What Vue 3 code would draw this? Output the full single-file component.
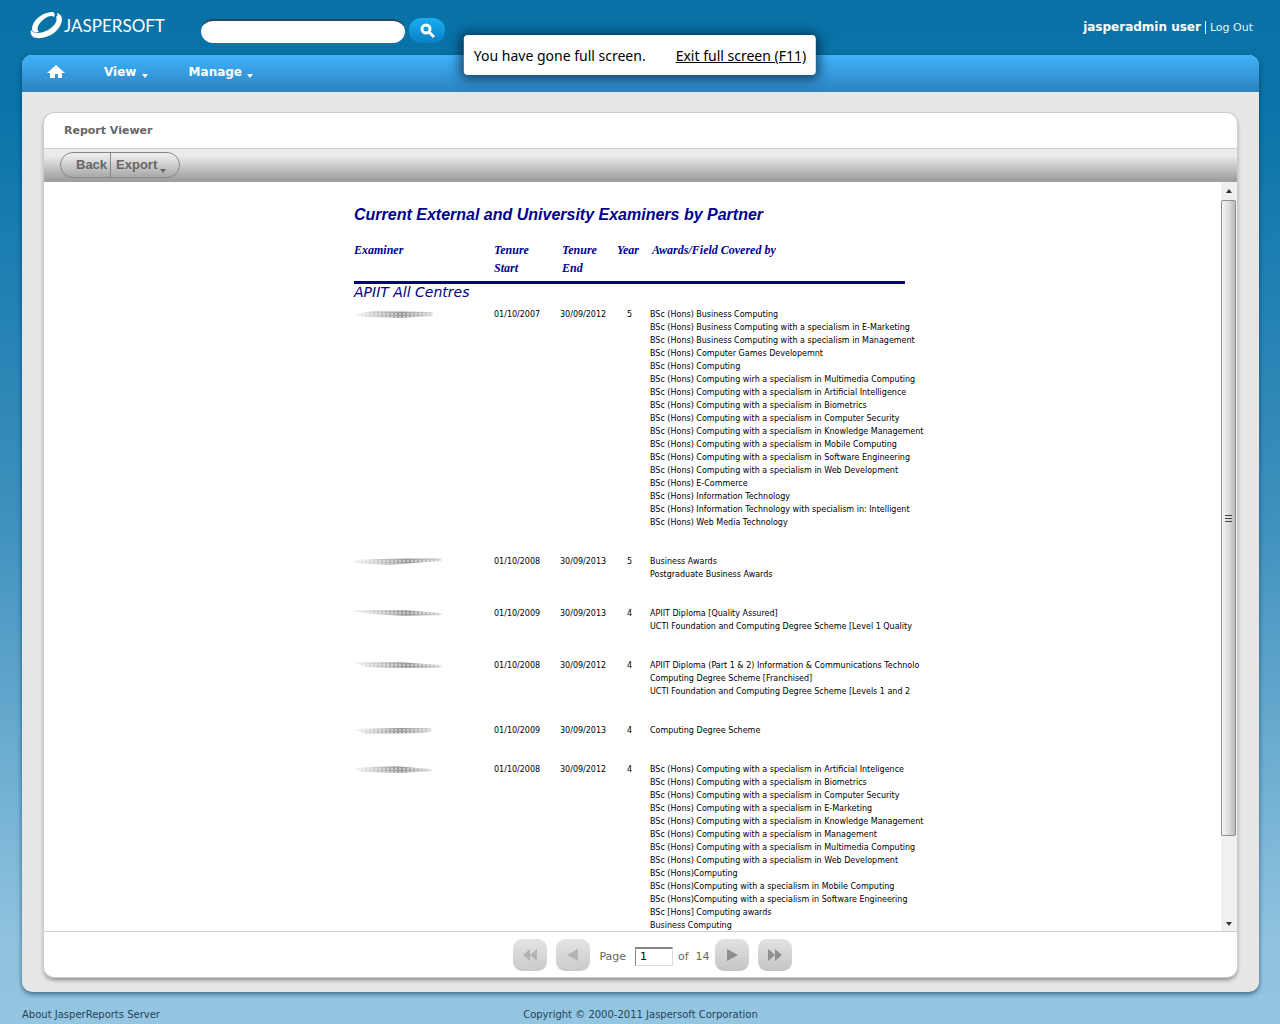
<script setup>
import { ref } from 'vue'

const page = ref(1)
const query = ref('')

const examiners = [
  {
    width: 79, shape: '0,5 18,1 78,2 79,6 45,8 12,7', start: '01/10/2007', end: '30/09/2012', years: 5,
    awards: [
      'BSc (Hons) Business Computing',
      'BSc (Hons) Business Computing with a specialism in E-Marketing',
      'BSc (Hons) Business Computing with a specialism in Management',
      'BSc (Hons) Computer Games Developemnt',
      'BSc (Hons) Computing',
      'BSc (Hons) Computing wirh a specialism in Multimedia Computing',
      'BSc (Hons) Computing with a specialism in Artificial Intelligence',
      'BSc (Hons) Computing with a specialism in Biometrics',
      'BSc (Hons) Computing with a specialism in Computer Security',
      'BSc (Hons) Computing with a specialism in Knowledge Management',
      'BSc (Hons) Computing with a specialism in Mobile Computing',
      'BSc (Hons) Computing with a specialism in Software Engineering',
      'BSc (Hons) Computing with a specialism in Web Development',
      'BSc (Hons) E-Commerce',
      'BSc (Hons) Information Technology',
      'BSc (Hons) Information Technology with specialism in: Intelligent',
      'BSc (Hons) Web Media Technology'
    ]
  },
  {
    width: 88, shape: '0,3 25,2 86,1 88,4 60,6 35,8 0,6', start: '01/10/2008', end: '30/09/2013', years: 5,
    awards: ['Business Awards', 'Postgraduate Business Awards']
  },
  {
    width: 88, shape: '0,1 50,1 86,4 88,6 50,7 20,5 0,3', start: '01/10/2009', end: '30/09/2013', years: 4,
    awards: ['APIIT Diploma [Quality Assured]', 'UCTI Foundation and Computing Degree Scheme [Level 1 Quality']
  },
  {
    width: 88, shape: '0,1 45,1 86,4 87,7 40,7 12,6', start: '01/10/2008', end: '30/09/2012', years: 4,
    awards: [
      'APIIT Diploma (Part 1 & 2) Information & Communications Technolo',
      'Computing Degree Scheme [Franchised]',
      'UCTI Foundation and Computing Degree Scheme [Levels 1 and 2'
    ]
  },
  {
    width: 79, shape: '0,3 40,2 76,2 78,5 70,7 12,8', start: '01/10/2009', end: '30/09/2013', years: 4,
    awards: ['Computing Degree Scheme']
  },
  {
    width: 79, shape: '0,3 40,1 76,4 78,6 45,8 8,7', start: '01/10/2008', end: '30/09/2012', years: 4,
    awards: [
      'BSc (Hons) Computing with a specialism in Artificial Inteligence',
      'BSc (Hons) Computing with a specialism in Biometrics',
      'BSc (Hons) Computing with a specialism in Computer Security',
      'BSc (Hons) Computing with a specialism in E-Marketing',
      'BSc (Hons) Computing with a specialism in Knowledge Management',
      'BSc (Hons) Computing with a specialism in Management',
      'BSc (Hons) Computing with a specialism in Multimedia Computing',
      'BSc (Hons) Computing with a specialism in Web Development',
      'BSc (Hons)Computing',
      'BSc (Hons)Computing with a specialism in Mobile Computing',
      'BSc (Hons)Computing with a specialism in Software Engineering',
      'BSc [Hons] Computing awards',
      'Business Computing'
    ]
  }
]
</script>

<template>
  <div class="app">
    <header class="banner">
      <a class="logo" href="#">
        <svg width="34" height="28" viewBox="0 0 34 28" aria-hidden="true">
          <path fill="#fff" d="M23 0C12 0 2 9 2 17C2 20 5 21 9 20C6 17 8 12 13 8C17 4 22 3 24 5C25 3 25 1 23 0Z" />
          <path fill="#fff" d="M27 1C34 3 33 11 28 17C22 25 9 28 3 25C1 23 0 21 1 18C3 22 11 22 18 18C25 14 28 8 26 5C27 4 28 3 27 1Z" />
        </svg>
        <span>JASPERSOFT</span>
      </a>
      <form class="search" @submit.prevent>
        <input v-model="query" type="text" aria-label="Search">
        <button type="submit" aria-label="Run search">
          <svg width="16" height="16" viewBox="0 0 16 16" aria-hidden="true">
            <circle cx="7" cy="6" r="4" fill="none" stroke="#fff" stroke-width="3" />
            <path d="M10 9L15 14" stroke="#fff" stroke-width="3" />
          </svg>
        </button>
      </form>
      <div class="account">
        <strong>jasperadmin user</strong>
        <a href="#">Log Out</a>
      </div>
    </header>

    <div class="shell">
      <nav class="menu">
        <a class="home" href="#" aria-label="Home">
          <svg width="18" height="14" viewBox="0 0 18 14" aria-hidden="true">
            <path fill="#fff" d="M9 0L18 8H15V13H11V9H8V13H3V8H0Z" />
          </svg>
        </a>
        <button type="button">View <i class="caret"></i></button>
        <button type="button">Manage <i class="caret"></i></button>
      </nav>

      <main class="panel">
        <h1>Report Viewer</h1>
        <div class="toolbar">
          <div class="group">
            <button type="button" class="back">Back</button>
            <button type="button" class="export">Export<i class="caret"></i></button>
          </div>
        </div>

        <div class="viewer">
          <div class="canvas">
            <article class="report">
              <h2>Current External and University Examiners by Partner</h2>
              <table>
                <colgroup>
                  <col class="c-name"><col class="c-start"><col class="c-end"><col class="c-year"><col>
                </colgroup>
                <thead>
                  <tr>
                    <th>Examiner</th>
                    <th>Tenure<br>Start</th>
                    <th class="end">Tenure<br>End</th>
                    <th class="year">Year</th>
                    <th class="awards-head">Awards/Field Covered by</th>
                  </tr>
                </thead>
                <tbody>
                  <tr>
                    <th class="centre" colspan="5" scope="rowgroup">APIIT All Centres</th>
                  </tr>
                  <tr v-for="(e, i) in examiners" :key="i">
                    <td>
                      <svg class="smudge" :width="e.width" height="10" aria-hidden="true">
                        <defs>
                          <linearGradient :id="'fade' + i">
                            <stop offset="0" stop-color="#777" stop-opacity="0.1" />
                            <stop offset="0.6" stop-color="#555" stop-opacity="0.6" />
                            <stop offset="1" stop-color="#777" stop-opacity="0.3" />
                          </linearGradient>
                          <pattern :id="'dots' + i" width="4" height="3" patternUnits="userSpaceOnUse">
                            <circle cx="2" cy="1" r="1" fill="#fff" fill-opacity="0.6" />
                          </pattern>
                          <filter :id="'soft' + i">
                            <feGaussianBlur stdDeviation="1 0.6" />
                          </filter>
                        </defs>
                        <polygon :points="e.shape" :fill="'url(#fade' + i + ')'" :filter="'url(#soft' + i + ')'" />
                        <polygon :points="e.shape" :fill="'url(#dots' + i + ')'" />
                      </svg>
                    </td>
                    <td>{{ e.start }}</td>
                    <td>{{ e.end }}</td>
                    <td class="count">{{ e.years }}</td>
                    <td>
                      <ul>
                        <li v-for="award in e.awards" :key="award">{{ award }}</li>
                      </ul>
                    </td>
                  </tr>
                </tbody>
              </table>
            </article>
          </div>
          <div class="scrollbar" aria-hidden="true">
            <i class="arrow up"></i>
            <div class="track">
              <div class="thumb"><i></i><i></i><i></i></div>
            </div>
            <i class="arrow down"></i>
          </div>
        </div>

        <div class="pager">
          <button type="button" disabled aria-label="First page">
            <svg width="18" height="14" viewBox="0 0 18 14"><path d="M9 1V13L2 7ZM16 1V13L9 7Z" /></svg>
          </button>
          <button type="button" disabled aria-label="Previous page">
            <svg width="18" height="14" viewBox="0 0 18 14"><path d="M14 1V13L3 7Z" /></svg>
          </button>
          <label for="page">Page</label>
          <input id="page" v-model="page" type="text">
          <span class="total">of&nbsp; 14</span>
          <button type="button" aria-label="Next page">
            <svg width="18" height="14" viewBox="0 0 18 14"><path d="M4 1V13L15 7Z" /></svg>
          </button>
          <button type="button" aria-label="Last page">
            <svg width="18" height="14" viewBox="0 0 18 14"><path d="M2 1V13L9 7ZM9 1V13L16 7Z" /></svg>
          </button>
        </div>
      </main>
    </div>

    <footer class="foot">
      <a href="#">About JasperReports Server</a>
      <span>Copyright © 2000-2011 Jaspersoft Corporation</span>
    </footer>

    <div class="notice" role="status">
      <span>You have gone full screen.</span>
      <a href="#">Exit full screen (F11)</a>
    </div>
  </div>
</template>

<style>
body {
  margin: 0;
}
</style>

<style scoped>
.app {
  box-sizing: border-box;
  display: flex;
  flex-direction: column;
  height: 100vh;
  min-height: 480px;
  padding: 0 21px 0 22px;
  position: relative;
  overflow: hidden;
  background: linear-gradient(#0872a6 0%, #0a74a8 10%, #1d7eb1 25%, #3d90bd 50%, #75b2d4 78%, #90c3df 92%, #94c5e1 100%);
  font-family: "DejaVu Sans", Verdana, sans-serif;
  font-size: 11px;
  color: #666;
}

button {
  font: inherit;
  color: inherit;
  padding: 0;
  border: 0;
  background: none;
}

.banner {
  flex: none;
  display: flex;
  align-items: flex-start;
  height: 55px;
}

.logo {
  display: flex;
  width: 171px;
  padding: 12px 0 0 8px;
  color: #fff;
  text-decoration: none;
  font: 17px/28px Lato, sans-serif;
}

.search {
  display: flex;
  align-items: center;
  gap: 4px;
  padding-top: 18px;
}

.search input {
  box-sizing: border-box;
  width: 204px;
  height: 24px;
  padding: 0 12px;
  border: 0;
  border-top: 2px solid #274860;
  border-radius: 12px;
  background: #fff;
}

.search button {
  display: flex;
  align-items: center;
  justify-content: center;
  width: 36px;
  height: 25px;
  border-radius: 12px;
  background: linear-gradient(#19aef2, #0a80c4);
}

.account {
  display: flex;
  margin-left: auto;
  padding: 21px 6px 0 0;
  line-height: 13px;
  color: #fff;
}

.account strong {
  font-size: 12px;
}

.account a {
  margin-left: 4px;
  padding-left: 4px;
  border-left: 1px solid #fff;
  color: #e4f3fb;
  text-decoration: none;
}

.shell {
  flex: 1;
  min-height: 0;
  display: flex;
  flex-direction: column;
  border-radius: 10px;
  background: #e6e6e6;
  box-shadow: 0 2px 5px rgba(0, 40, 70, 0.6);
}

.menu {
  flex: none;
  display: flex;
  gap: 41px;
  box-sizing: border-box;
  height: 37px;
  padding: 0 25px 4px;
  border-radius: 10px 10px 0 0;
  background: linear-gradient(#3fb3fa, #2c82c0);
  color: #fff;
  font-size: 12px;
  font-weight: bold;
}

.menu a {
  display: flex;
  align-items: center;
  width: 16px;
}

.menu svg {
  flex: none;
}

.caret {
  display: inline-block;
  border: 3px solid transparent;
  border-top: 4px solid currentColor;
  border-bottom: 0;
  vertical-align: -2px;
  margin-left: 1px;
}

.panel {
  flex: 1;
  min-height: 0;
  display: flex;
  flex-direction: column;
  margin: 21px 22px 15px;
  border-radius: 10px;
  background: #fff;
  box-shadow: 0 0 0 1px #ccc, 0 3px 4px rgba(0, 0, 0, 0.4);
}

h1 {
  flex: none;
  margin: 0;
  padding: 1px 0 0 20px;
  font-size: 11px;
  line-height: 34px;
}

.toolbar {
  flex: none;
  display: flex;
  box-sizing: border-box;
  height: 34px;
  padding: 3px 16px;
  border-top: 1px solid #ccc;
  background: linear-gradient(#ebebeb 20%, #a0a0a0 92%);
}

.group {
  display: flex;
  box-sizing: border-box;
  width: 120px;
  height: 26px;
  border: 1px solid #888;
  border-radius: 13px;
  font: bold 13px/24px "Liberation Sans", Arial, sans-serif;
}

.back {
  padding: 0 3px 0 15px;
}

.export {
  padding-left: 5px;
  border-left: 1px solid #888;
}

.export .caret {
  margin-left: 3px;
  vertical-align: -4px;
}

.viewer {
  flex: 1;
  min-height: 0;
  display: flex;
  overflow: hidden;
  border-bottom: 1px solid #ccc;
}

.canvas {
  flex: 1;
  min-width: 0;
  padding-right: 1px;
  overflow: hidden;
}

.report {
  box-sizing: border-box;
  width: 596px;
  margin: 0 auto;
  padding: 23px 6px 0 20px;
  color: #000;
}

h2 {
  margin: 0 0 16px;
  color: #000090;
  font: italic bold 16px/20px "Liberation Sans", Arial, sans-serif;
}

table {
  width: 100%;
  table-layout: fixed;
  border-collapse: collapse;
}

.c-name {
  width: 140px;
}

.c-start {
  width: 66px;
}

.c-end {
  width: 57px;
}

.c-year {
  width: 33px;
}

th,
td {
  padding: 0;
  text-align: left;
  vertical-align: top;
}

thead th {
  height: 40px;
  color: #000090;
  font: italic bold 12px/18px "Liberation Serif", "Times New Roman", serif;
}

thead th.end,
thead th.awards-head {
  padding-left: 2px;
}

tbody .centre {
  padding: 2px 0 7px;
  color: #000084;
  background: linear-gradient(#000084, #000084) 0 0 / 551px 3px no-repeat;
  font: italic 14px/18px "DejaVu Sans", Verdana, sans-serif;
}

td {
  padding-bottom: 26px;
  font-size: 8px;
  line-height: 13px;
}

.count {
  padding-left: 10px;
}

.smudge {
  display: block;
  margin-top: 2px;
}

ul {
  margin: 0;
  padding: 0;
  list-style: none;
}

li {
  height: 13px;
  overflow: hidden;
  white-space: nowrap;
}

.scrollbar {
  flex: none;
  display: flex;
  flex-direction: column;
  align-items: center;
  width: 16px;
  background: #f0f0f0;
}

.arrow {
  flex: none;
  border: 3px solid transparent;
}

.up {
  margin: 7px 0 5px;
  border-bottom: 4px solid #333;
  border-top: 0;
}

.down {
  margin: 7px 0 5px;
  border-top: 4px solid #333;
  border-bottom: 0;
}

.track {
  flex: 1;
  align-self: stretch;
  padding-top: 2px;
}

.thumb {
  box-sizing: border-box;
  display: flex;
  flex-direction: column;
  align-items: center;
  justify-content: center;
  gap: 2px;
  width: 15px;
  height: 89%;
  border: 1px solid #8e8e8e;
  border-radius: 2px;
  background: linear-gradient(90deg, #f4f4f4, #dedee0 50%, #b9b9bd);
}

.thumb i {
  width: 7px;
  height: 1px;
  background: #444;
}

.pager {
  flex: none;
  display: flex;
  align-items: center;
  justify-content: center;
  height: 45px;
  padding-left: 24px;
}

.pager button {
  display: flex;
  align-items: center;
  justify-content: center;
  width: 34px;
  height: 32px;
  border-radius: 9px;
  background: linear-gradient(#e2e2e2, #c4c4c4);
}

.pager button + button {
  margin-left: 9px;
}

.pager path {
  fill: #8f8f8f;
}

.pager button:disabled {
  background: linear-gradient(#e4e4e4, #cacaca);
}

.pager button:disabled path {
  fill: #b4b4b4;
}

.pager label {
  margin: 4px 9px 0;
}

.pager input {
  box-sizing: border-box;
  width: 38px;
  height: 19px;
  margin-top: 3px;
  padding: 0 4px;
  border: 1px solid #ddd;
  border-top: 2px solid #888;
  border-left-color: #888;
  font: inherit;
  color: #000;
}

.total {
  margin: 4px 5px 0;
}

.foot {
  flex: none;
  display: flex;
  height: 32px;
  padding-top: 16px;
  box-sizing: border-box;
  line-height: 13px;
  font-size: 10px;
  color: #24465a;
}

.foot a {
  flex: 1;
  color: inherit;
  text-decoration: none;
}

.foot::after {
  content: "";
  flex: 1;
}

.notice {
  position: absolute;
  top: 35px;
  left: 50%;
  transform: translateX(-50%);
  box-sizing: border-box;
  display: flex;
  gap: 30px;
  padding: 0 10px;
  border-radius: 4px;
  background: #fff;
  box-shadow: 0 1px 12px 3px rgba(0, 20, 40, 0.65);
  color: #000;
  font: 14px/41px "Noto Sans", sans-serif;
  height: 40px;
  white-space: nowrap;
}

.notice a {
  color: inherit;
}
</style>
